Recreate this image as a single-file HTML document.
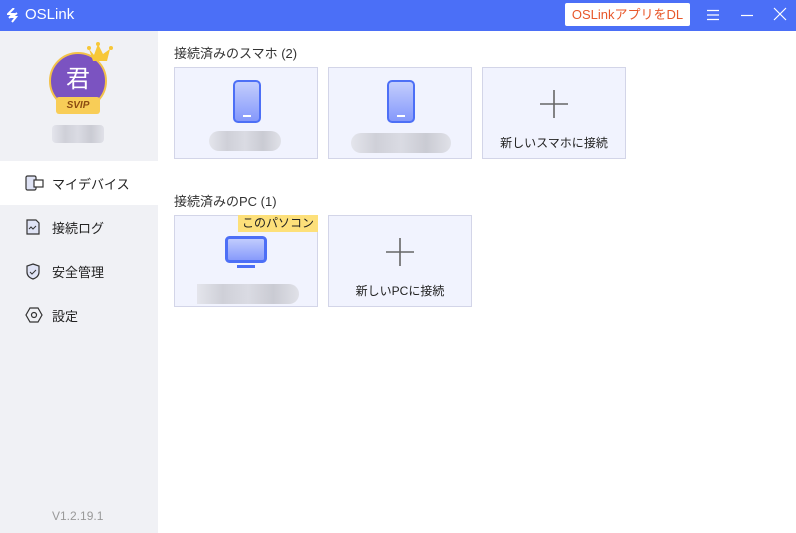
<!DOCTYPE html>
<html><head><meta charset="utf-8"><style>
*{margin:0;padding:0;box-sizing:border-box}
body{width:796px;height:533px;overflow:hidden;background:#fff;font-family:"Liberation Sans","Noto Sans CJK JP",sans-serif;position:relative;color:#222}
.tb{position:absolute;left:0;top:0;width:796px;height:31px;background:#4b6ff7;color:#fff}
.side{position:absolute;left:0;top:31px;width:158px;height:502px;background:#f0f1f5}
.abs{position:absolute}
.card{position:absolute;width:144px;height:92px;background:#f1f3fe;border:1px solid #d3d5e8}
.blur{position:absolute;height:20px;border-radius:10px;background:linear-gradient(90deg,#e4e5ec,#cfd0d8,#dadbe3,#cacbd3,#e0e1e8)}
.menu{position:absolute;left:0;width:158px;height:44px;font-size:13px;display:flex;align-items:center}
.menu svg{position:absolute;left:25px}
.menu span{position:absolute;left:52px}
.h{position:absolute;left:174px;font-size:13px;color:#333}
.plus{position:absolute;left:57px;top:22px}
.lbl{position:absolute;width:100%;text-align:center;font-size:12px;color:#222}
</style></head><body>
<div class="tb">
<svg class="abs" style="left:7px;top:8px" width="12" height="15" viewBox="0 0 12 15"><path d="M7 0L1 6h5L2 10" stroke="#fff" stroke-width="2" fill="none"/><path d="M10 5L5 9h4L5 14" stroke="#fff" stroke-width="2" fill="none"/></svg>
<div class="abs" style="left:25px;top:6px;font-size:15px">OSLink</div>
<div class="abs" style="left:565px;top:3px;width:125px;height:23px;background:#fff;border-radius:2px;color:#e8572a;font-size:13px;text-align:center;line-height:23px">OSLinkアプリをDL</div>
<svg class="abs" style="left:706px;top:9px" width="14" height="12"><path d="M1 1.5h12M1 6h12M1 10.5h12" stroke="#fff" stroke-width="1.2"/></svg>
<svg class="abs" style="left:740px;top:9px" width="14" height="12"><path d="M1 6.5h12" stroke="#fff" stroke-width="1.2"/></svg>
<svg class="abs" style="left:773px;top:7px" width="14" height="14"><path d="M1 1l12 12M13 1L1 13" stroke="#fff" stroke-width="1.2"/></svg>
</div>
<div class="side">
<div class="abs" style="left:49px;top:21px;width:58px;height:58px;border-radius:50%;background:#7b53c1;border:2px solid #f3c24a;color:#fff;font-size:24px;text-align:center;line-height:52px">君</div>
<svg class="abs" style="left:85px;top:10px" width="30" height="24" viewBox="0 0 30 24"><path d="M4 8l5 6 4-11 5 10 7-5-3 12H8z" fill="#f7c738"/><circle cx="4" cy="7" r="2" fill="#f7c738"/><circle cx="13" cy="3" r="2" fill="#f7c738"/><circle cx="26" cy="7" r="2" fill="#f7c738"/></svg>
<div class="abs" style="left:56px;top:66px;width:44px;height:17px;background:#f8cd57;border-radius:3px;color:#8b4b12;font-size:10px;font-weight:bold;font-style:italic;text-align:center;line-height:17px">SVIP</div>
<div class="blur" style="left:52px;top:94px;width:52px;height:18px;border-radius:4px"></div>
<div class="menu" style="top:130px;background:#fff"><svg width="20" height="16"><rect x="1" y="1" width="10" height="14" rx="1.5" fill="#dfe3f5" stroke="#333" stroke-width="1.2"/><rect x="9" y="5" width="9" height="7" fill="#fff" stroke="#333" stroke-width="1.2"/></svg><span>マイデバイス</span></div>
<div class="menu" style="top:174px"><svg width="16" height="16"><path d="M2 1h9l3 3v11H2z" fill="#dfe3f5" stroke="#333" stroke-width="1.2"/><path d="M4 10l2-2 2 2 3-3" stroke="#333" fill="none"/></svg><span>接続ログ</span></div>
<div class="menu" style="top:218px"><svg width="16" height="17"><path d="M8 1l6 2v6c0 4-3 6-6 7-3-1-6-3-6-7V3z" fill="#dfe3f5" stroke="#333" stroke-width="1.2"/><path d="M5 9l2 2 4-4" stroke="#333" fill="none"/></svg><span>安全管理</span></div>
<div class="menu" style="top:262px"><svg width="18" height="16"><path d="M5 1h8l4 7-4 7H5L1 8z" fill="none" stroke="#333" stroke-width="1.2"/><circle cx="9" cy="8" r="2.5" fill="none" stroke="#333" stroke-width="1.2"/></svg><span>設定</span></div>
<div class="abs" style="left:52px;top:478px;font-size:12px;color:#999">V1.2.19.1</div>
</div>
<div class="h" style="top:43px">接続済みのスマホ (2)</div>
<div class="card" style="left:174px;top:67px">
<svg class="abs" style="left:58px;top:12px" width="28" height="44"><defs><linearGradient id="g" x1="0" y1="0" x2="0" y2="1"><stop offset="0" stop-color="#c5cffd"/><stop offset="1" stop-color="#8397fb"/></linearGradient></defs><rect x="1" y="1" width="26" height="41" rx="4" fill="url(#g)" stroke="#4d6ff6" stroke-width="2"/><rect x="10" y="35" width="8" height="2" fill="#fff"/></svg>
<div class="blur" style="left:34px;top:63px;width:72px"></div></div>
<div class="card" style="left:328px;top:67px">
<svg class="abs" style="left:58px;top:12px" width="28" height="44"><rect x="1" y="1" width="26" height="41" rx="4" fill="url(#g)" stroke="#4d6ff6" stroke-width="2"/><rect x="10" y="35" width="8" height="2" fill="#fff"/></svg>
<div class="blur" style="left:22px;top:65px;width:100px"></div></div>
<div class="card" style="left:482px;top:67px">
<svg class="plus" width="28" height="28"><path d="M14 0v28M0 14h28" stroke="#666" stroke-width="1.6"/></svg>
<div class="lbl" style="top:66px">新しいスマホに接続</div></div>
<div class="h" style="top:191px">接続済みのPC (1)</div>
<div class="card" style="left:174px;top:215px">
<div class="abs" style="right:-1px;top:-1px;width:80px;height:17px;background:#fde07a;font-size:12px;text-align:center;line-height:17px">このパソコン</div>
<svg class="abs" style="left:50px;top:20px" width="42" height="34"><defs><linearGradient id="h" x1="0" y1="0" x2="0" y2="1"><stop offset="0" stop-color="#c5cffd"/><stop offset="1" stop-color="#8397fb"/></linearGradient></defs><rect x="1.5" y="1.5" width="39" height="24" rx="3" fill="url(#h)" stroke="#4d6ff6" stroke-width="3"/><rect x="12" y="29" width="18" height="3" fill="#4d6ff6"/></svg>
<div class="blur" style="left:22px;top:68px;width:102px;border-radius:0 10px 10px 0"></div></div>
<div class="card" style="left:328px;top:215px">
<svg class="plus" width="28" height="28"><path d="M14 0v28M0 14h28" stroke="#666" stroke-width="1.6"/></svg>
<div class="lbl" style="top:66px">新しいPCに接続</div></div>
</body></html>
